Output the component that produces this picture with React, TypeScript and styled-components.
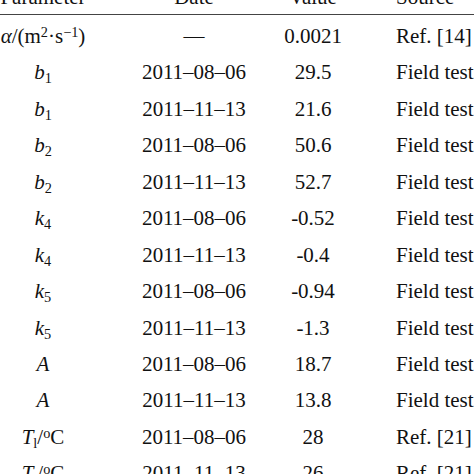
import React from "react";
import styled, { createGlobalStyle } from "styled-components";

const GlobalStyle = createGlobalStyle`
  html, body {
    margin: 0;
    padding: 0;
    background: #ffffff;
  }
  body {
    font-family: "Liberation Serif", "Times New Roman", serif;
    color: #111111;
  }
`;

const Viewport = styled.div`
  width: 474px;
  height: 474px;
  overflow: hidden;
`;

const Table = styled.div`
  margin-top: -19px;
  font-size: 21px;
`;

const Row = styled.div<{ $header?: boolean }>`
  display: grid;
  grid-template-columns: 130px 128px 110px 1fr;
  height: ${(p) => (p.$header ? "33px" : "36.45px")};
  line-height: ${(p) => (p.$header ? "33px" : "36.45px")};
  white-space: nowrap;
  ${(p) => (p.$header ? "border-bottom: 1.4px solid #444;" : "")}
`;

const Body = styled.div`
  padding-top: 3px;
`;

const Param = styled.div`
  text-align: center;
  padding-right: 44px;
`;

const Cell = styled.div`
  text-align: center;
`;

const Source = styled.div`
  text-align: left;
  padding-left: 28px;
`;

const Sym = styled.i`
  font-style: italic;
`;

const Sub = styled.sub`
  font-size: 0.68em;
  vertical-align: -0.28em;
  line-height: 0;
`;

const Sup = styled.sup`
  font-size: 0.68em;
  vertical-align: 0.42em;
  line-height: 0;
`;

type Item = {
  param: React.ReactNode;
  date: string;
  value: string;
  source: string;
};

const sub = (s: string, n: string) => (
  <>
    <Sym>{s}</Sym>
    <Sub>{n}</Sub>
  </>
);

const rows: Item[] = [
  {
    param: (
      <>
        <Sym>α</Sym>/(m<Sup>2</Sup>·s<Sup>−1</Sup>)
      </>
    ),
    date: "—",
    value: "0.0021",
    source: "Ref. [14]",
  },
  { param: sub("b", "1"), date: "2011–08–06", value: "29.5", source: "Field test" },
  { param: sub("b", "1"), date: "2011–11–13", value: "21.6", source: "Field test" },
  { param: sub("b", "2"), date: "2011–08–06", value: "50.6", source: "Field test" },
  { param: sub("b", "2"), date: "2011–11–13", value: "52.7", source: "Field test" },
  { param: sub("k", "4"), date: "2011–08–06", value: "-0.52", source: "Field test" },
  { param: sub("k", "4"), date: "2011–11–13", value: "-0.4", source: "Field test" },
  { param: sub("k", "5"), date: "2011–08–06", value: "-0.94", source: "Field test" },
  { param: sub("k", "5"), date: "2011–11–13", value: "-1.3", source: "Field test" },
  { param: <Sym>A</Sym>, date: "2011–08–06", value: "18.7", source: "Field test" },
  { param: <Sym>A</Sym>, date: "2011–11–13", value: "13.8", source: "Field test" },
  {
    param: (
      <>
        {sub("T", "l")}/<Sup>o</Sup>C
      </>
    ),
    date: "2011–08–06",
    value: "28",
    source: "Ref. [21]",
  },
  {
    param: (
      <>
        {sub("T", "l")}/<Sup>o</Sup>C
      </>
    ),
    date: "2011–11–13",
    value: "26",
    source: "Ref. [21]",
  },
];

const App: React.FC = () => {
  return (
    <Viewport>
      <GlobalStyle />
      <Table>
        <Row $header>
          <Param>Parameter</Param>
          <Cell>Date</Cell>
          <Cell>Value</Cell>
          <Source>Source</Source>
        </Row>
        <Body>
          {rows.map((r, i) => (
            <Row key={i}>
              <Param>{r.param}</Param>
              <Cell>{r.date}</Cell>
              <Cell>{r.value}</Cell>
              <Source>{r.source}</Source>
            </Row>
          ))}
        </Body>
      </Table>
    </Viewport>
  );
};

export default App;
